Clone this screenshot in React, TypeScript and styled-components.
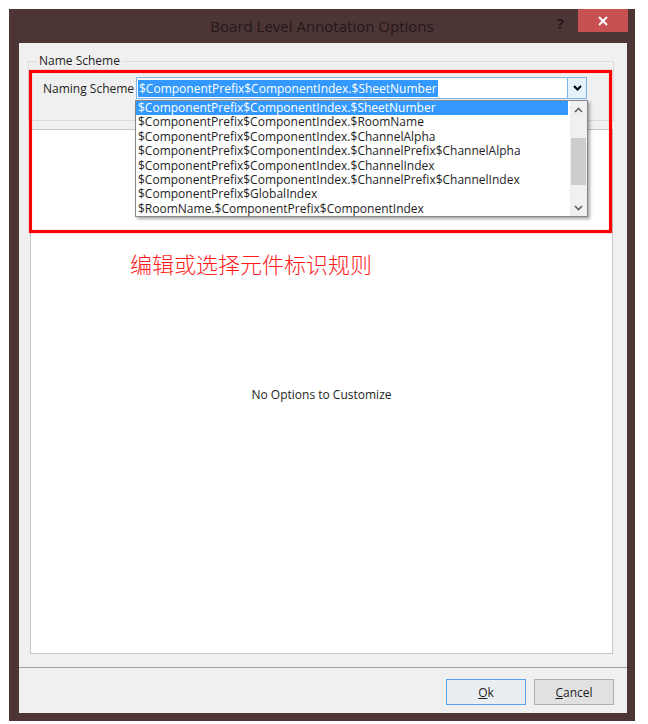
import React from "react";
import styled, { createGlobalStyle } from "styled-components";

const GlobalStyle = createGlobalStyle`
  html, body {
    margin: 0;
    padding: 0;
    background: #ffffff;
  }
  body {
    font-family: "Open Sans", "Noto Sans", "DejaVu Sans", sans-serif;
    font-size: 12px;
    color: #1e1e1e;
  }
`;

const schemes = [
  "$ComponentPrefix$ComponentIndex.$SheetNumber",
  "$ComponentPrefix$ComponentIndex.$RoomName",
  "$ComponentPrefix$ComponentIndex.$ChannelAlpha",
  "$ComponentPrefix$ComponentIndex.$ChannelPrefix$ChannelAlpha",
  "$ComponentPrefix$ComponentIndex.$ChannelIndex",
  "$ComponentPrefix$ComponentIndex.$ChannelPrefix$ChannelIndex",
  "$ComponentPrefix$GlobalIndex",
  "$RoomName.$ComponentPrefix$ComponentIndex",
];

const Window = styled.div`
  margin: 9px 0 0 9px;
  width: 626px;
  height: 712px;
  box-sizing: border-box;
  background: #4d3536;
  padding: 0 8px 8px 10px;
  display: flex;
  flex-direction: column;
`;

const TitleBar = styled.div`
  height: 34px;
  display: grid;
  grid-template-columns: 1fr auto 1fr;
  margin: 0 -8px 0 -10px;
`;

const Title = styled.div`
  grid-column: 2;
  align-self: center;
  font-size: 15px;
  color: #241819;
`;

const Controls = styled.div`
  grid-column: 3;
  justify-self: end;
  display: flex;
  align-items: flex-start;
  padding-right: 7px;
`;

const Help = styled.span`
  font-size: 15px;
  font-weight: 700;
  color: #241819;
  line-height: 23px;
  margin-right: 14px;
  margin-top: 3px;
`;

const CloseButton = styled.div`
  width: 50px;
  height: 23px;
  background: #c75050;
  display: flex;
  align-items: center;
  justify-content: center;
`;

const Body = styled.div`
  position: relative;
  height: 670px;
  background: #f0f0f0;
  display: flex;
  flex-direction: column;
`;

const Main = styled.div`
  flex: 1;
  display: flex;
  flex-direction: column;
  padding: 10px 13px 13px 9px;
  min-height: 0;
`;

const GroupBox = styled.fieldset`
  margin: 0;
  padding: 8px 0 21px 0;
  border: 1px solid #dcdcdc;
`;

const Legend = styled.legend`
  margin-left: 8px;
  padding: 0 2px;
  line-height: 16px;
  font-size: 12px;
  color: #1e1e1e;
`;

const Row = styled.div`
  display: flex;
  align-items: center;
  height: 22px;
  padding-left: 14px;
`;

const Label = styled.span`
  width: 93px;
  white-space: nowrap;
  color: #1e1e1e;
`;

const Combo = styled.div`
  width: 451px;
  height: 22px;
  box-sizing: border-box;
  border: 1px solid #7eb4ea;
  background: #ffffff;
  display: flex;
`;

const ComboValue = styled.div`
  flex: 1;
  display: flex;
  align-items: center;
  padding-left: 1px;
`;

const Selected = styled.span`
  background: #3399ff;
  color: #ffffff;
  line-height: 17px;
  padding: 0 1px;
  white-space: nowrap;
`;

const ComboButton = styled.div`
  width: 18px;
  border-left: 1px solid #7eb4ea;
  background: #e5f1fb;
  display: flex;
  align-items: center;
  justify-content: center;
`;

const Panel = styled.div`
  flex: 1;
  margin: 8px 1px 0 2px;
  border: 1px solid #c6c6c6;
  background: #ffffff;
  display: flex;
  align-items: center;
  justify-content: center;
`;

const PanelText = styled.span`
  color: #1e1e1e;
  padding-top: 6px;
`;

const BottomBar = styled.div`
  height: 46px;
  box-sizing: border-box;
  border-top: 1px solid #a0a0a0;
  display: flex;
  justify-content: flex-end;
  align-items: flex-start;
  gap: 8px;
  padding: 11px 13px 0 0;
`;

const Button = styled.button<{ $default?: boolean }>`
  width: 80px;
  height: 26px;
  box-sizing: border-box;
  border: 1px solid ${({ $default }) => ($default ? "#5aa3ea" : "#adadad")};
  background: ${({ $default }) => ($default ? "#e9eef3" : "#e1e1e1")};
  font-family: inherit;
  font-size: 12px;
  color: #1e1e1e;
  padding: 0;
  u {
    text-decoration: underline;
  }
`;

const Highlight = styled.div`
  position: absolute;
  left: 10px;
  top: 27px;
  width: 583px;
  height: 163px;
  box-sizing: border-box;
  border: 3px solid #ff0000;
  box-shadow: 0 0 1px rgba(255, 0, 0, 0.6), inset 0 0 1px rgba(255, 0, 0, 0.6);
  pointer-events: none;
`;

const DropList = styled.div`
  position: absolute;
  left: 116px;
  top: 57px;
  width: 453px;
  height: 117px;
  box-sizing: border-box;
  border: 1px solid #828790;
  background: #ffffff;
  box-shadow: 2px 2px 3px rgba(0, 0, 0, 0.35);
  display: flex;
`;

const Options = styled.div`
  flex: 1;
  display: flex;
  flex-direction: column;
`;

const Option = styled.div<{ $active?: boolean }>`
  height: 14.375px;
  line-height: 14.375px;
  padding-left: 2px;
  margin-right: 2px;
  white-space: nowrap;
  background: ${({ $active }) => ($active ? "#3399ff" : "transparent")};
  color: ${({ $active }) => ($active ? "#ffffff" : "#1e1e1e")};
`;

const ScrollBar = styled.div`
  width: 17px;
  background: #f0f0f0;
  display: flex;
  flex-direction: column;
`;

const ScrollArrow = styled.div`
  height: 17px;
  display: flex;
  align-items: center;
  justify-content: center;
`;

const Track = styled.div`
  flex: 1;
  padding: 20px 1px 0;
`;

const Thumb = styled.div`
  height: 47px;
  background: #cdcdcd;
`;

const Note = styled.div`
  position: absolute;
  left: 111px;
  top: 206px;
  font-family: "Noto Sans CJK SC", "Noto Sans", sans-serif;
  font-size: 22px;
  font-weight: 300;
  line-height: 28px;
  color: #ff1a1a;
  white-space: nowrap;
`;

const Chevron = ({ up, color = "#000", w = 2 }: { up?: boolean; color?: string; w?: number }) => (
  <svg width="9" height="6" viewBox="0 0 9 6">
    <path
      d={up ? "M1 5 L4.5 1.5 L8 5" : "M1 1 L4.5 4.5 L8 1"}
      fill="none"
      stroke={color}
      strokeWidth={w}
    />
  </svg>
);

export default function App() {
  return (
    <>
      <GlobalStyle />
      <Window>
        <TitleBar>
          <Title>Board Level Annotation Options</Title>
          <Controls>
            <Help>?</Help>
            <CloseButton>
              <svg width="10" height="10" viewBox="0 0 10 10">
                <path d="M1 1 L9 9 M9 1 L1 9" stroke="#ffffff" strokeWidth="2" />
              </svg>
            </CloseButton>
          </Controls>
        </TitleBar>
        <Body>
          <Main>
            <GroupBox>
              <Legend>Name Scheme</Legend>
              <Row>
                <Label>Naming Scheme</Label>
                <Combo>
                  <ComboValue>
                    <Selected>{schemes[0]}</Selected>
                  </ComboValue>
                  <ComboButton>
                    <Chevron />
                  </ComboButton>
                </Combo>
              </Row>
            </GroupBox>
            <Panel>
              <PanelText>No Options to Customize</PanelText>
            </Panel>
          </Main>
          <BottomBar>
            <Button $default>
              <u>O</u>k
            </Button>
            <Button>
              <u>C</u>ancel
            </Button>
          </BottomBar>
          <Highlight />
          <DropList>
            <Options>
              {schemes.map((s, i) => (
                <Option key={s} $active={i === 0}>
                  {s}
                </Option>
              ))}
            </Options>
            <ScrollBar>
              <ScrollArrow>
                <Chevron up color="#606060" w={1.6} />
              </ScrollArrow>
              <Track>
                <Thumb />
              </Track>
              <ScrollArrow>
                <Chevron color="#606060" w={1.6} />
              </ScrollArrow>
            </ScrollBar>
          </DropList>
          <Note>编辑或选择元件标识规则</Note>
        </Body>
      </Window>
    </>
  );
}
